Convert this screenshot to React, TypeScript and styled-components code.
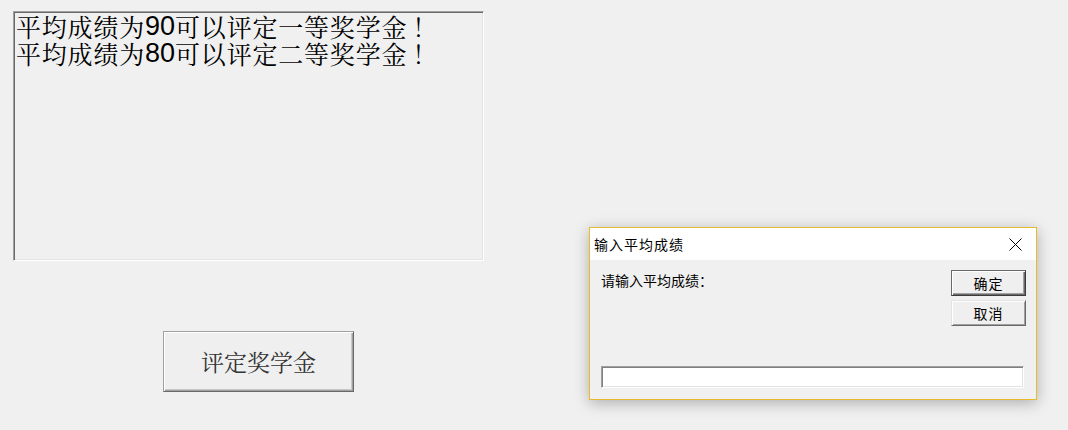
import React from "react";
import styled, { createGlobalStyle } from "styled-components";

const Global = createGlobalStyle`
  html, body {
    margin: 0;
    padding: 0;
    background: #f0f0f0;
    width: 1068px;
    height: 430px;
    overflow: hidden;
  }
  #root {
    position: relative;
    width: 1068px;
    height: 430px;
  }
`;

const serif = `"Noto Serif CJK SC", "Noto Sans CJK SC", "Liberation Serif", serif`;
const sans = `"Noto Sans CJK SC", "Noto Sans", "Liberation Sans", sans-serif`;

const Page = styled.div`
  display: flex;
  flex-direction: column;
  align-items: flex-start;
  padding: 11px 0 0 13px;
  box-sizing: border-box;
  width: 1068px;
  height: 430px;
`;

const OutputBox = styled.div`
  box-sizing: border-box;
  width: 471px;
  height: 250px;
  border-style: solid;
  border-width: 1px;
  border-color: #a0a0a0 #ffffff #ffffff #a0a0a0;
  box-shadow: inset 1px 1px 0 #696969, inset -1px -1px 0 #e3e3e3;
  padding: 1px 0 0 2px;
  font-family: ${serif};
  font-size: 25px;
  letter-spacing: 0.8px;
  color: #000;
  white-space: pre;
`;

const Line = styled.div`
  display: flex;
  align-items: center;
  height: 27px;
  line-height: 27px;
`;

const Digits = styled.span`
  font-family: "Liberation Sans", Arial, sans-serif;
  font-size: 27px;
  letter-spacing: 0;
`;

const Bang = styled.span`
  padding-left: 5px;
`;

const BigButton = styled.button`
  margin: 70px 0 0 150px;
  box-sizing: border-box;
  width: 191px;
  height: 61px;
  background: #efefef;
  border-style: solid;
  border-width: 1px;
  border-color: #a0a0a0 #696969 #696969 #a0a0a0;
  box-shadow: inset 1px 1px 0 #ffffff, inset -1px -1px 0 #a0a0a0, inset -2px -2px 0 #c8c8c8;
  font-family: ${serif};
  font-size: 23px;
  color: #333;
  padding: 0;
  cursor: default;
`;

const Dialog = styled.div`
  position: absolute;
  left: 589px;
  top: 227px;
  width: 448px;
  height: 173px;
  box-sizing: border-box;
  border: 1px solid #e8bb2c;
  background: #f0f0f0;
  box-shadow: 0 3px 14px rgba(0, 0, 0, 0.28);
  display: flex;
  flex-direction: column;
  font-family: ${sans};
`;

const TitleBar = styled.div`
  height: 32px;
  background: #ffffff;
  display: flex;
  align-items: center;
  justify-content: space-between;
  padding: 0 14px 0 4px;
`;

const Title = styled.span`
  font-size: 14px;
  letter-spacing: 1px;
  color: #000;
`;

const Close = styled.svg`
  width: 13px;
  height: 13px;
`;

const Body = styled.div`
  flex: 1;
  display: flex;
  flex-direction: column;
  padding: 10px 10px 11px 11px;
`;

const TopRow = styled.div`
  display: flex;
  justify-content: space-between;
  align-items: flex-start;
`;

const Prompt = styled.span`
  font-size: 14px;
  color: #000;
`;

const ButtonCol = styled.div`
  display: flex;
  flex-direction: column;
  gap: 4px;
`;

const DlgButton = styled.button<{ $default?: boolean }>`
  box-sizing: border-box;
  width: 75px;
  height: 26px;
  padding: 0;
  background: #efefef;
  font-family: ${sans};
  font-size: 14px;
  letter-spacing: 1px;
  color: #000;
  border-style: solid;
  border-width: 1px;
  border-color: ${(p) =>
    p.$default ? "#696969 #3c3c3c #3c3c3c #696969" : "#e3e3e3 #696969 #696969 #e3e3e3"};
  box-shadow: ${(p) =>
    p.$default
      ? "inset 1px 1px 0 #ffffff, inset -1px -1px 0 #696969, inset -2px -2px 0 #a0a0a0"
      : "inset 1px 1px 0 #ffffff, inset -1px -1px 0 #a0a0a0"};
  cursor: default;
`;

const Input = styled.div`
  margin-top: auto;
  box-sizing: border-box;
  width: 423px;
  height: 22px;
  background: #ffffff;
  border-style: solid;
  border-width: 1px;
  border-color: #a0a0a0 #ffffff #ffffff #a0a0a0;
  box-shadow: inset 1px 1px 0 #808080, inset -1px -1px 0 #e3e3e3;
`;

export default function App() {
  return (
    <>
      <Global />
      <Page>
        <OutputBox>
          <Line>
            平均成绩为<Digits>90</Digits>可以评定一等奖学金<Bang>！</Bang>
          </Line>
          <Line>
            平均成绩为<Digits>80</Digits>可以评定二等奖学金<Bang>！</Bang>
          </Line>
        </OutputBox>
        <BigButton>评定奖学金</BigButton>
      </Page>
      <Dialog>
        <TitleBar>
          <Title>输入平均成绩</Title>
          <Close viewBox="0 0 13 13">
            <path d="M0.5 0.5 L12.5 12.5 M12.5 0.5 L0.5 12.5" stroke="#000" strokeWidth="1" fill="none" />
          </Close>
        </TitleBar>
        <Body>
          <TopRow>
            <Prompt>请输入平均成绩：</Prompt>
            <ButtonCol>
              <DlgButton $default>确定</DlgButton>
              <DlgButton>取消</DlgButton>
            </ButtonCol>
          </TopRow>
          <Input />
        </Body>
      </Dialog>
    </>
  );
}
